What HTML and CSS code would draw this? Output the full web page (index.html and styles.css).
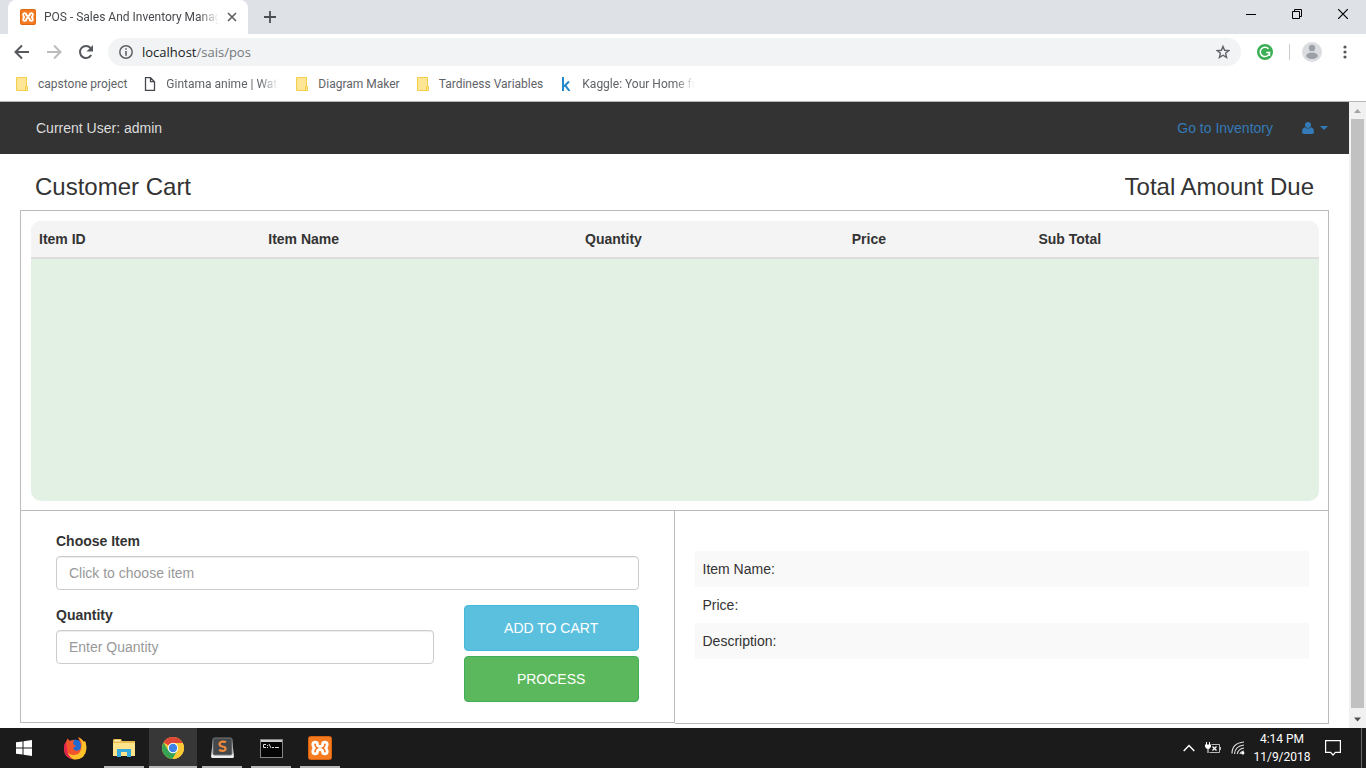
FILE: index.html
```html
<!DOCTYPE html>
<html lang="en">
<head>
<meta charset="utf-8">
<meta name="viewport" content="width=device-width, initial-scale=1">
<title>POS - Sales And Inventory Management</title>
<link rel="stylesheet" href="styles.css">
</head>
<body>
<svg class="defs" aria-hidden="true">
  <symbol id="xampp" viewBox="0 0 24 24">
    <rect width="24" height="24" rx="3" fill="#d9620f"/>
    <rect x="1" y="1" width="22" height="22" rx="2" fill="#f47b20"/>
    <path d="M9.500 9.500V8.500A2.300 2.300 0 0 0 4.800 8.500Q4.800 10.500 6.300 12Q4.800 13.500 4.800 15.500A2.300 2.300 0 0 0 9.500 15.500V14.500Q12 12.500 14.500 14.500V15.500A2.300 2.300 0 0 0 19.200 15.500Q19.200 13.500 17.700 12Q19.200 10.500 19.200 8.500A2.300 2.300 0 0 0 14.500 8.500V9.500Q12 11.500 9.500 9.500Z" fill="none" stroke="#fff" stroke-width="2.800" stroke-linejoin="round"/>
  </symbol>
  <symbol id="folder" viewBox="0 0 12 14">
    <path d="M.5.5h10v9h1v4H.5z" fill="#ffe694" stroke="#f4cd4a"/>
    <path d="M9.500 9.500h2v4h-2z" fill="#ffe694" stroke="#f4cd4a"/>
  </symbol>
</svg>

<div class="screen">
  <header class="tabstrip">
    <div class="tab">
      <svg class="tab-icon"><use href="#xampp"/></svg>
      <span class="tab-title">POS - Sales And Inventory Management</span>
      <button class="icon-btn tab-close" aria-label="Close tab"><svg width="10" height="10" viewBox="0 0 10 10"><path d="M1 1l8 8M9 1L1 9" stroke="#5f6368" stroke-width="1.700"/></svg></button>
    </div>
    <button class="icon-btn new-tab" aria-label="New tab"><svg width="12" height="12" viewBox="0 0 12 12"><path d="M6 0v12M0 6h12" stroke="#4b4f54" stroke-width="1.800"/></svg></button>
    <div class="window-controls">
      <button class="icon-btn win-btn" aria-label="Minimize"><svg width="10" height="10" viewBox="0 0 10 10"><path d="M0 5.500h10" stroke="#000"/></svg></button>
      <button class="icon-btn win-btn" aria-label="Restore"><svg width="10" height="10" viewBox="0 0 10 10"><path d="M.5 2.500h7v7h-7zM2.500 2.500v-2h7v7h-2" fill="none" stroke="#000"/></svg></button>
      <button class="icon-btn win-btn" aria-label="Close"><svg width="10" height="10" viewBox="0 0 10 10"><path d="M0 0l10 10M10 0L0 10" stroke="#000" stroke-width="1.200"/></svg></button>
    </div>
  </header>

  <div class="toolbar">
    <button class="icon-btn nav-btn" aria-label="Back"><svg width="16" height="16" viewBox="0 0 16 16"><path d="M15 8H2M8 1.500L1.500 8 8 14.500" fill="none" stroke="#55585d" stroke-width="2"/></svg></button>
    <button class="icon-btn nav-btn" aria-label="Forward"><svg width="16" height="16" viewBox="0 0 16 16"><path d="M1 8h13M8 1.500L14.500 8 8 14.500" fill="none" stroke="#babcbe" stroke-width="2"/></svg></button>
    <button class="icon-btn nav-btn" aria-label="Reload"><svg width="16" height="16" viewBox="0 0 16 16"><path d="M13.200 11A6 6 0 1 1 12.500 4" fill="none" stroke="#55585d" stroke-width="2"/><path d="M15 1v6.500H8.500z" fill="#55585d"/></svg></button>
    <div class="omnibox">
      <svg width="14" height="14" viewBox="0 0 14 14"><circle cx="7" cy="7" r="6.200" fill="none" stroke="#5f6368" stroke-width="1.500"/><path d="M7 3.300v1.500M7 6v4.800" stroke="#5f6368" stroke-width="1.600"/></svg>
      <span class="url">localhost<span class="url-path">/sais/pos</span></span>
      <button class="icon-btn" aria-label="Bookmark this page"><svg width="14" height="14" viewBox="0 0 14 14"><path d="M7 1.400l1.600 3.900 4.200.3-3.200 2.700 1 4.100L7 10.200l-3.600 2.200 1-4.100L1.200 5.600l4.200-.3z" fill="none" stroke="#5f6368" stroke-width="1.400"/></svg></button>
    </div>
    <button class="icon-btn ext" aria-label="Grammarly"><svg width="16" height="16" viewBox="0 0 16 16"><circle cx="8" cy="8" r="8" fill="#3cae56"/><path d="M11.500 4.800A4.700 4.700 0 1 0 12.600 8.500H9.300" fill="none" stroke="#fff" stroke-width="1.500"/><path d="M12.600 8.500v3.500" stroke="#fff" stroke-width="1.200"/></svg></button>
    <span class="toolbar-sep"></span>
    <button class="icon-btn profile" aria-label="Profile"><svg width="20" height="20" viewBox="0 0 20 20"><circle cx="10" cy="10" r="10" fill="#dadce0"/><circle cx="10" cy="6" r="3.200" fill="#9aa0a6"/><ellipse cx="10" cy="13.800" rx="5.800" ry="3.200" fill="#9aa0a6"/></svg></button>
    <button class="icon-btn menu" aria-label="Menu"><svg width="4" height="14" viewBox="0 0 4 14"><g fill="#55585d"><circle cx="2" cy="2" r="1.600"/><circle cx="2" cy="7" r="1.600"/><circle cx="2" cy="12" r="1.600"/></g></svg></button>
  </div>

  <nav class="bookmarks" aria-label="Bookmarks">
    <a class="bookmark" href="#"><svg width="12" height="14"><use href="#folder"/></svg><span>capstone project</span></a>
    <a class="bookmark" href="#"><svg width="12" height="14" viewBox="0 0 12 14"><path d="M1.500.7h5l4 4v8.600h-9zM6.500.7v4h4" fill="none" stroke="#45484c" stroke-width="1.300"/></svg><span class="clipped">Gintama anime | Watch online</span></a>
    <a class="bookmark" href="#"><svg width="12" height="14"><use href="#folder"/></svg><span>Diagram Maker</span></a>
    <a class="bookmark" href="#"><svg width="12" height="14"><use href="#folder"/></svg><span>Tardiness Variables</span></a>
    <a class="bookmark" href="#"><svg width="12" height="14" viewBox="0 0 12 14"><path d="M3 0v14M9 4.500L4 9.500M5.200 8.400L9.500 14" fill="none" stroke="#2188cb" stroke-width="2"/></svg><span class="clipped">Kaggle: Your Home for Data</span></a>
  </nav>

  <div class="viewport">
    <div class="page">
      <nav class="navbar">
        <span class="current-user">Current User: admin</span>
        <a class="nav-link" href="#">Go to Inventory</a>
        <button class="user-menu" aria-label="User menu">
          <svg width="12" height="12" viewBox="0 0 12 12"><circle cx="6" cy="3" r="3" fill="#337ab7"/><path d="M3 5.200Q6 8 9 5.200Q12 6 12 10Q12 12 10 12H2Q0 12 0 10Q0 6 3 5.200z" fill="#337ab7"/></svg>
          <span class="caret"></span>
        </button>
      </nav>
      <main class="content">
        <div class="titles"><h3>Customer Cart</h3><h3>Total Amount Due</h3></div>
        <section class="cart-panel">
          <div class="cart">
            <table class="cart-table">
              <thead><tr><th class="c-id">Item ID</th><th class="c-name">Item Name</th><th class="c-qty">Quantity</th><th class="c-price">Price</th><th>Sub Total</th></tr></thead>
            </table>
          </div>
        </section>
        <div class="lower">
          <form class="entry">
            <div class="field"><label for="item">Choose Item</label><input id="item" type="text" placeholder="Click to choose item"></div>
            <div class="entry-row">
              <div class="field"><label for="qty">Quantity</label><input id="qty" type="text" placeholder="Enter Quantity"></div>
              <div class="actions">
                <button class="btn btn-info" type="button">ADD TO CART</button>
                <button class="btn btn-success" type="button">PROCESS</button>
              </div>
            </div>
          </form>
          <section class="details">
            <table class="details-table">
              <tbody><tr><td>Item Name:</td></tr><tr><td>Price:</td></tr><tr><td>Description:</td></tr></tbody>
            </table>
          </section>
        </div>
      </main>
    </div>
    <div class="scrollbar" aria-hidden="true">
      <svg width="17" height="17" viewBox="0 0 17 17"><path d="M5 11l3.500-4 3.500 4z" fill="#a3a3a3"/></svg>
      <span class="thumb"></span>
      <svg width="17" height="17" viewBox="0 0 17 17"><path d="M5 6.500l3.500 4 3.500-4z" fill="#505050"/></svg>
    </div>
  </div>

  <footer class="taskbar">
    <button class="task start" aria-label="Start"><svg width="16" height="16" viewBox="0 0 16 16"><path d="M0 2.300L6.500 1.400V7.500H0zM7.500 1.200L16 0v7.500H7.500zM0 8.500h6.500v6.100L0 13.700zM7.500 8.500H16V16l-8.500-1.200z" fill="#fff"/></svg></button>
    <button class="task" aria-label="Firefox"><svg width="24" height="24" viewBox="0 0 24 24"><circle cx="12" cy="12.500" r="9" fill="#2069cf"/><path d="M3 6L4.500 2.500 7 5Q9 3.500 11 4L10 8l3 2-3 2q1 3.500 5 2.500 4-1.500 2.500-7L15 1q5 3 6 5l1-1q2.500 6 0 11-3.500 7.500-11 7.500Q1 22.500 1 13 1 9 3 6z" fill="#f2552c"/><path d="M15 1q4.500 4 3.500 10-.5 7-7 8-5 .5-7-3 1 7.500 8 7.500 10-.5 11-11Q23.500 8 22 5l-1 1q-1.500-3-6-5z" fill="#ffc22b"/><path d="M1 10q-.5 12 9 13.300Q5 20 4 14l-1-8q-2 2-2 4z" fill="#e3214f"/></svg></button>
    <button class="task open" aria-label="File Explorer"><svg width="22" height="20" viewBox="0 0 22 20"><path d="M0 2l1-1h7l1 2h13v15H0z" fill="#e8bf50"/><path d="M0 5h22v13H0z" fill="#ffe48b"/><path d="M1.500 2h6v1.500h-6z" fill="#fff3ba"/><path d="M4 19v-8h14v8h-4v-5H8v5z" fill="#38a9dc"/></svg></button>
    <button class="task open active" aria-label="Google Chrome"><svg width="22" height="22" viewBox="0 0 22 22"><circle cx="11" cy="11" r="11" fill="#fbc935"/><path d="M11 11L1.500 5.500A11 11 0 0 1 20.800 6z" fill="#de4637"/><path d="M1.500 5.500A11 11 0 0 0 10.500 22L15.500 13.500 11 11 6 13z" fill="#35a354"/><path d="M20.800 6A11 11 0 0 1 10.500 22l5-8.500L11 6z" fill="#fbc935"/><circle cx="11" cy="11" r="5.200" fill="#fff"/><circle cx="11" cy="11" r="4.200" fill="#3e82e5"/></svg></button>
    <button class="task open" aria-label="Sublime Text"><svg width="23" height="22" viewBox="0 0 23 22"><path d="M2 2h19l2 18-1 1H1l-1-1z" fill="#eee"/><rect x="2" y="1" width="19" height="17" rx="1.500" fill="#45484a" stroke="#77797b"/><path d="M15 5Q9 3.500 8.500 7q0 2 3 2.500 3.500.5 3 3Q13 15 8 13" fill="none" stroke="#f18b3d" stroke-width="2.200"/></svg></button>
    <button class="task open" aria-label="Command Prompt"><svg width="23" height="19" viewBox="0 0 23 19"><rect x=".5" y=".5" width="22" height="18" fill="#050505" stroke="#858585"/><path d="M1 2h21" stroke="#ccc" stroke-width="2"/><path d="M6 5.500H3.500v3H6M7.500 6v1M7.500 8v1M9 5l2 4M12 8.500h2M15 8.500h4" fill="none" stroke="#ddd"/></svg></button>
    <button class="task open" aria-label="XAMPP"><svg width="24" height="24"><use href="#xampp"/></svg></button>
    <div class="tray">
      <svg width="12" height="8" viewBox="0 0 12 8"><path d="M.7 7L6 1.500 11.300 7" fill="none" stroke="#fff" stroke-width="1.400"/></svg>
      <svg width="16" height="13" viewBox="0 0 16 13"><path d="M6.500 2.500h8v8H4.500M15.500 5v3" fill="none" stroke="#bbb"/><path d="M1.500 0v3M4.500 0v3M3 6v5" stroke="#fff"/><path d="M0 2.500h6v2Q5 7 3 7T0 4.500z" fill="#fff"/><path d="M7.500 4.500l4 4M11.500 4.500l-4 4" stroke="#fff" stroke-width="1.300"/></svg>
      <svg width="14" height="14" viewBox="0 0 14 14"><g fill="none" stroke="#ddd" stroke-width="1.200"><path d="M1 12.500Q1 2 13 1"/><path d="M3.500 13Q4 5 13 4"/><path d="M6.300 13Q7 8 13 7"/><path d="M9 13Q9.500 10.500 13 10"/></g><circle cx="11.800" cy="12" r="1.600" fill="#fff"/></svg>
      <div class="clock"><time>4:14 PM</time><time>11/9/2018</time></div>
      <svg class="notify" width="16" height="16" viewBox="0 0 16 16"><path d="M.6.6h14.800v11.800h-5L8 15l-2.400-2.600h-5z" fill="none" stroke="#fff" stroke-width="1.200"/></svg>
      <span class="show-desktop"></span>
    </div>
  </footer>
</div>
</body>
</html>
```

FILE: styles.css
```css
* { box-sizing: border-box; }
body { margin: 0; font: 14px/20px "Liberation Sans", Arial, sans-serif; color: #333; background: #fff; }
svg { display: block; flex: none; }
button { font: inherit; }
.defs { position: absolute; width: 0; height: 0; }
.screen { display: flex; flex-direction: column; min-height: 100vh; }
.icon-btn { display: flex; align-items: center; justify-content: center; border: 0; padding: 0; background: none; }
.toolbar { font-family: "Open Sans", "Noto Sans", sans-serif; }
.tabstrip, .bookmarks, .taskbar { font-family: Roboto, "Open Sans", sans-serif; }

/* Tabs */
.tabstrip { display: flex; align-items: center; height: 34px; padding-left: 8px; background: #dee1e6; }
.tab { display: flex; align-items: center; width: 240px; height: 34px; padding: 0 11px 0 12px; border-radius: 8px 8px 0 0; background: #fff; color: #45484c; font-size: 12px; }
.tab-icon { width: 16px; height: 16px; margin-right: 8px; }
.tab-title { flex: 1; overflow: hidden; white-space: nowrap; -webkit-mask-image: linear-gradient(to left, transparent, #000 20px); mask-image: linear-gradient(to left, transparent, #000 20px); }
.tab-close { margin-left: 8px; }
.new-tab { width: 28px; height: 28px; margin-left: 8px; }
.window-controls { display: flex; align-self: flex-start; margin-left: auto; }
.win-btn { width: 46px; height: 28px; }

/* Toolbar */
.toolbar { display: flex; align-items: center; height: 36px; padding: 0 18px 0 6px; }
.nav-btn { width: 32px; height: 28px; }
.omnibox { display: flex; align-items: center; gap: 9px; flex: 1; height: 28px; margin-left: 6px; padding: 0 11px; border-radius: 14px; background: #f1f3f4; font-size: 13px; }
.url { flex: 1; color: #202124; }
.url-path { color: #74777b; }
.ext { margin-left: 16px; }
.toolbar-sep { width: 1px; height: 16px; margin-left: 16px; background: #ccc; }
.profile { margin-left: 12px; }
.menu { width: 6px; margin-left: 20px; }

/* Bookmarks */
.bookmarks { display: flex; align-items: center; gap: 17px; height: 32px; padding: 0 16px 4px; border-bottom: 1px solid #b6b4b6; }
.bookmark { display: flex; align-items: center; gap: 10px; color: #5f6368; font-size: 12px; text-decoration: none; white-space: nowrap; }
.clipped { width: 113px; overflow: hidden; -webkit-mask-image: linear-gradient(to left, transparent, #000 20px); mask-image: linear-gradient(to left, transparent, #000 20px); }

/* Page */
.viewport { display: flex; flex: 1; }
.page { flex: 1; min-width: 0; }
.navbar { display: flex; align-items: center; height: 52px; padding: 0 21px 0 36px; background: #333; }
.current-user { flex: 1; color: #ddd; }
.nav-link { color: #337ab7; text-decoration: none; }
.user-menu { display: flex; align-items: center; gap: 6px; margin-left: 29px; padding: 0; border: 0; background: none; }
.caret { border: 4px solid transparent; border-top-color: #337ab7; border-bottom: 0; }
.content { padding: 0 20px; }
.titles { display: flex; justify-content: space-between; padding: 20px 15px 10px; }
h3 { margin: 0; font-size: 24px; line-height: 26px; font-weight: 400; }
.cart-panel { padding: 10px 9px 9px 10px; border: 1px solid #bbb; }
.cart { height: 280px; overflow: hidden; border-radius: 10px; background: #e3f1e4; }
.cart-table { width: 100%; table-layout: fixed; border-collapse: collapse; }
.cart-table th { padding: 8px; border-bottom: 2px solid #ddd; background: #f4f4f4; text-align: left; }
.c-id { width: 17.8%; }
.c-name { width: 24.6%; }
.c-qty { width: 20.7%; }
.c-price { width: 14.5%; }

.lower { display: grid; grid-template-columns: 1fr 1fr; }
.entry { padding: 20px 35px; border: 1px solid #bbb; border-top: 0; }
.field { display: flex; flex-direction: column; gap: 5px; margin-bottom: 15px; font-weight: 700; }
.field input { width: 100%; height: 34px; padding: 6px 12px; border: 1px solid #ccc; border-radius: 4px; background: #fff; box-shadow: inset 0 1px 1px rgba(0, 0, 0, .075); font: inherit; font-weight: 400; color: #555; }
.field input::placeholder { color: #999; opacity: 1; }
.entry-row { display: grid; grid-template-columns: 1fr 30%; column-gap: 30px; }
.actions { display: flex; flex-direction: column; gap: 5px; }
.btn { height: 46px; border: 1px solid; border-radius: 4px; color: #fff; }
.btn-info { border-color: #46b8da; background: #5bc0de; }
.btn-success { border-color: #3fae56; background: #5cb85c; }
.details { padding: 40px 19px 0 20px; margin-bottom: -1px; border: 1px solid #bbb; border-width: 0 1px 1px 0; }
.details-table { width: 100%; border-collapse: collapse; }
.details-table td { padding: 8px; }
.details-table tr:nth-child(odd) { background: #f9f9f9; }

/* Scrollbar */
.scrollbar { display: flex; flex-direction: column; width: 17px; background: #f1f1f1; }
.thumb { flex: 1; margin: 0 2px 3px; background: #c1c1c1; }

/* Taskbar */
.taskbar { display: flex; height: 40px; background: #1c1b1b; color: #fff; }
.task { display: flex; align-items: center; justify-content: center; width: 48px; margin-right: 1px; padding: 0; border: 0; border-bottom: 2px solid transparent; border-top: 2px solid transparent; background: none; }
.start { margin-right: 3px; }
.open { background: linear-gradient(#b9b7b7, #b9b7b7) center bottom / 40px 2px no-repeat border-box; }
.active { background: linear-gradient(#b9b7b7, #b9b7b7) center bottom / 48px 2px no-repeat border-box #373737; }
.tray { display: flex; align-items: center; gap: 10px; margin-left: auto; }
.clock { display: flex; flex-direction: column; align-items: center; width: 54px; font-size: 12px; line-height: 18px; white-space: nowrap; }
.notify { margin-left: 6px; }
.show-desktop { width: 5px; height: 40px; margin-left: 10px; border-left: 1px solid #666; }
```
